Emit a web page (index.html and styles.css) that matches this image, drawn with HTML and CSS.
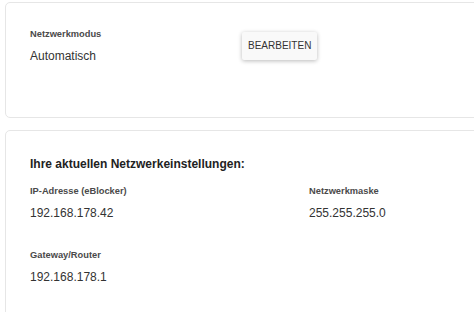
FILE: index.html
```html
<!DOCTYPE html>
<html lang="de">
<head>
    <meta charset="UTF-8">
    <meta name="viewport" content="width=device-width, initial-scale=1.0">
    <title>Netzwerk</title>
    <link rel="stylesheet" href="styles.css">
</head>
<body>

    <!-- Netzwerkmodus -->
    <div class="card card-mode">
        <div class="row">
            <div class="col-mode">
                <div class="field-label">Netzwerkmodus</div>
                <div class="field-value">Automatisch</div>
            </div>
            <div class="col-action">
                <button type="button" class="btn">BEARBEITEN</button>
            </div>
        </div>
    </div>

    <!-- Aktuelle Einstellungen -->
    <div class="card card-settings">
        <h2 class="card-title">Ihre aktuellen Netzwerkeinstellungen:</h2>
        <div class="settings-grid">
            <div class="field">
                <div class="field-label">IP-Adresse (eBlocker)</div>
                <div class="field-value">192.168.178.42</div>
            </div>
            <div class="field">
                <div class="field-label">Netzwerkmaske</div>
                <div class="field-value">255.255.255.0</div>
            </div>
            <div class="field">
                <div class="field-label">Gateway/Router</div>
                <div class="field-value">192.168.178.1</div>
            </div>
        </div>
    </div>

</body>
</html>
```

FILE: styles.css
```css
body {
    font-family: "Liberation Sans", Arial, sans-serif;
    background-color: #fff;
    color: #333;
    margin: 0;
    padding: 2px 0 0 5px;
    overflow: hidden;
}

.card {
    width: 480px;
    background-color: #fff;
    border: 1px solid #e6e6e6;
    border-radius: 5px;
    padding: 25px 24px 0 24px;
    box-sizing: border-box;
}

.card-mode {
    height: 116px;
    margin-bottom: 12px;
}

.card-settings {
    height: 200px;
}

.row {
    display: flex;
}

.col-mode {
    width: 212px;
}

.col-action {
    padding-top: 4px;
}

.field-label {
    font-size: 9.3px;
    font-weight: bold;
    line-height: 12px;
    color: #4a4a4a;
}

.field-value {
    font-size: 12px;
    line-height: 16px;
    color: #333;
    margin-top: 8px;
}

.btn {
    height: 28px;
    padding: 0 6px;
    font-family: inherit;
    font-size: 10px;
    line-height: 28px;
    color: #333;
    background-color: #f9f9f9;
    border: none;
    border-radius: 2px;
    box-shadow: 0 1px 4px rgba(0, 0, 0, 0.28);
}

.card-title {
    margin: 0 0 13px 0;
    font-size: 12px;
    line-height: 16px;
    font-weight: bold;
    color: #222;
}

.settings-grid {
    display: grid;
    grid-template-columns: 279px 1fr;
    row-gap: 28px;
}
```
